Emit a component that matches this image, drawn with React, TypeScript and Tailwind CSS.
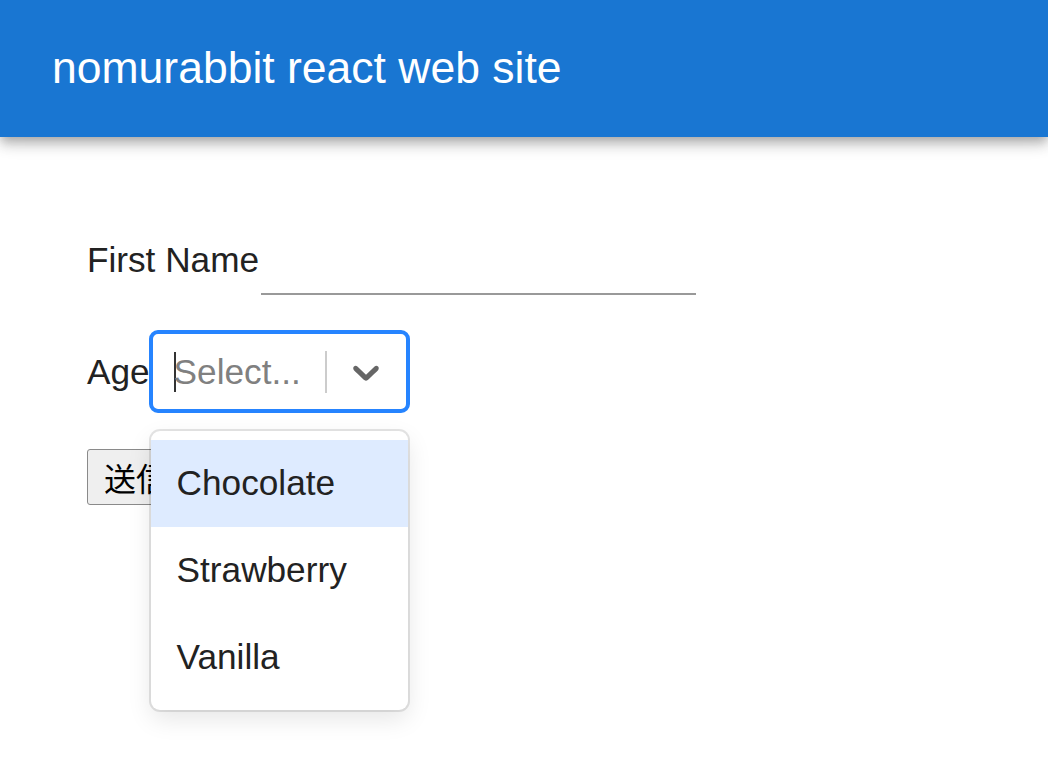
import React from "react";

export default function App() {
  return (
    <div className="relative min-h-[767px] w-full bg-white font-['Liberation_Sans',Arial,sans-serif] text-[#212121]">
      <header className="flex h-[137px] items-center bg-[#1976d2] pl-[52px] shadow-[0_4px_9px_-2px_rgba(0,0,0,0.2),0_9px_11px_0_rgba(0,0,0,0.14),0_2px_22px_0_rgba(0,0,0,0.12)]">
        <h1 className="text-[44.5px] font-normal leading-none text-white">nomurabbit react web site</h1>
      </header>

      <main className="pl-[87px] pt-[103px]">
        <div className="flex items-start">
          <label className="text-[35.2px] leading-[40px] text-[#222]">First Name</label>
          <input
            className="ml-[2px] h-[55px] w-[435px] border-b-2 border-[#999] bg-transparent text-[35.2px] outline-none"
            type="text"
          />
        </div>

        <div className="mt-[35px] flex items-center">
          <span className="text-[35.2px] leading-[40px] text-[#222]">Age</span>
          <div className="relative">
            <div className="-ml-[1px] flex h-[83px] w-[261px] items-center rounded-[9px] border-[4px] border-[#2684ff] bg-white">
              <div className="flex flex-1 items-center pl-[21px]">
                <span className="h-[40px] w-[2px] bg-[#333]" />
                <span className="-ml-[2px] text-[35.2px] leading-[40px] text-[#808080]">Select...</span>
              </div>
              <span className="h-[42px] w-[2px] bg-[#cccccc]" />
              <div className="flex h-full w-[79px] items-center justify-center">
                <svg width="44" height="44" viewBox="0 0 20 20" fill="#666666" aria-hidden="true">
                  <path d="M4.516 7.548c0.436-0.446 1.043-0.481 1.576 0l3.908 3.747 3.908-3.747c0.533-0.481 1.141-0.446 1.574 0 0.436 0.445 0.408 1.197 0 1.615-0.406 0.418-4.695 4.502-4.695 4.502-0.217 0.223-0.502 0.335-0.787 0.335s-0.57-0.112-0.789-0.335c0 0-4.287-4.084-4.695-4.502s-0.436-1.17 0-1.615z" />
                </svg>
              </div>
            </div>

            <div className="absolute left-[1px] top-[101px] z-10 w-[257px] rounded-[9px] bg-white py-[9px] shadow-[0_0_0_2px_rgba(0,0,0,0.1),0_9px_24px_rgba(0,0,0,0.1)]">
              <div className="flex h-[87px] items-center bg-[#deebff] pl-[26px] text-[35.2px] text-[#222]">Chocolate</div>
              <div className="flex h-[87px] items-center pl-[26px] text-[35.2px] text-[#222]">Strawberry</div>
              <div className="flex h-[87px] items-center pl-[26px] text-[35.2px] text-[#222]">Vanilla</div>
            </div>
          </div>
        </div>

        <div className="mt-[36px]">
          <button
            type="button"
            className="h-[56px] rounded-[3px] border border-[#8a8a8a] bg-[#efefef] px-[16px] font-['Noto_Sans_CJK_JP',sans-serif] text-[32px] leading-none text-black"
          >
            送信
          </button>
        </div>
      </main>
    </div>
  );
}
